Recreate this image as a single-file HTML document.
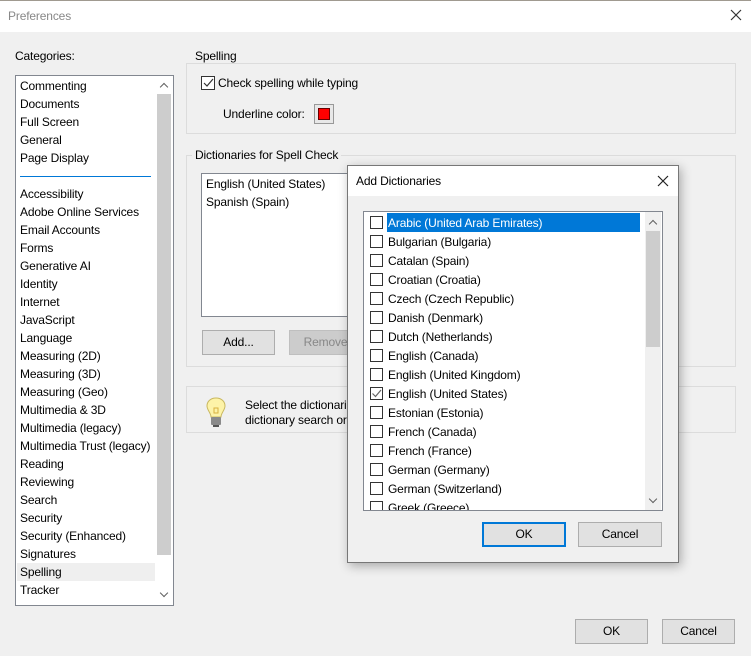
<!DOCTYPE html>
<html><head><style>
*{margin:0;padding:0;box-sizing:border-box}
body{width:751px;height:656px;background:#f0f0f0;font-family:"Liberation Sans",sans-serif;font-size:12px;color:#000;position:relative;overflow:hidden;letter-spacing:-0.15px}
.a{position:absolute}
.t{position:absolute;white-space:nowrap;line-height:14px}
.grp{position:absolute;border:1px solid #dcdcdc}
.btn{position:absolute;background:#e1e1e1;border:1px solid #adadad;text-align:center;line-height:22px}
.cb{position:absolute;width:14px;height:14px;border:1px solid #333;background:#fff}
.arr{position:absolute;width:6px;height:6px;border-left:1.5px solid #606060;border-top:1.5px solid #606060}
</style></head><body>
<div class="a" style="left:0;top:0;width:751px;height:32px;background:#fff;border-top:1px solid #a09a90"></div>
<div class="t" style="left:8px;top:9px;color:#888">Preferences</div>
<svg class="a" style="left:730px;top:9px" width="12" height="12"><path d="M1 1L11 11M11 1L1 11" stroke="#333" stroke-width="1.2"/></svg>

<div class="t" style="left:15px;top:49px">Categories:</div>
<div class="a" style="left:15px;top:75px;width:159px;height:531px;background:#fff;border:1px solid #828790"></div>
<div class="a" style="left:157px;top:94px;width:14px;height:461px;background:#cdcdcd"></div>
<div class="arr" style="left:161px;top:84px;transform:rotate(45deg)"></div>
<div class="arr" style="left:161px;top:590px;transform:rotate(225deg)"></div>
<div class="a" style="left:20px;top:176px;width:131px;height:1px;background:#0078d7"></div>
<div class="a" style="left:17px;top:563px;width:138px;height:18px;background:#efefef"></div>
<div class="a" style="left:20px;top:77px;line-height:18px">Commenting<br>Documents<br>Full Screen<br>General<br>Page Display<br><br>Accessibility<br>Adobe Online Services<br>Email Accounts<br>Forms<br>Generative AI<br>Identity<br>Internet<br>JavaScript<br>Language<br>Measuring (2D)<br>Measuring (3D)<br>Measuring (Geo)<br>Multimedia &amp; 3D<br>Multimedia (legacy)<br>Multimedia Trust (legacy)<br>Reading<br>Reviewing<br>Search<br>Security<br>Security (Enhanced)<br>Signatures<br>Spelling<br>Tracker</div>

<div class="grp" style="left:186px;top:63px;width:550px;height:71px"></div>
<div class="t" style="left:192px;top:49px;background:#f0f0f0;padding:0 3px">Spelling</div>
<div class="cb" style="left:201px;top:76px"><svg width="12" height="12" style="position:absolute;left:0;top:0"><path d="M2 6L5 9L11 2" stroke="#333" fill="none" stroke-width="1.2"/></svg></div>
<div class="t" style="left:218px;top:76px">Check spelling while typing</div>
<div class="t" style="left:223px;top:107px">Underline color:</div>
<div class="a" style="left:314px;top:104px;width:20px;height:20px;border:1px solid #999;background:#e8e8e8"></div>
<div class="a" style="left:318px;top:108px;width:12px;height:12px;background:#f00;border:1px solid #600"></div>

<div class="grp" style="left:186px;top:155px;width:550px;height:212px"></div>
<div class="t" style="left:192px;top:148px;background:#f0f0f0;padding:0 3px">Dictionaries for Spell Check</div>
<div class="a" style="left:201px;top:173px;width:160px;height:144px;background:#fff;border:1px solid #828790"></div>
<div class="t" style="left:206px;top:177px">English (United States)</div>
<div class="t" style="left:206px;top:195px">Spanish (Spain)</div>
<div class="btn" style="left:202px;top:330px;width:73px;height:25px">Add...</div>
<div class="btn" style="left:289px;top:330px;width:73px;height:25px;color:#888;background:#cccccc;border-color:#bfbfbf">Remove</div>

<div class="grp" style="left:186px;top:386px;width:550px;height:47px"></div>
<svg class="a" style="left:205px;top:397px" width="22" height="32" viewBox="0 0 22 32"><path d="M11 1C5 1 2 5 2 9c0 4 4 7 4 11h10c0-4 4-7 4-11 0-4-3-8-9-8z" fill="#fdf3a8" stroke="#c9b860"/><rect x="9" y="11" width="4" height="5" fill="none" stroke="#d8b040"/><rect x="6" y="20" width="10" height="8" fill="#8a8a8a" rx="1"/><rect x="8" y="28" width="6" height="2" fill="#555"/></svg>
<div class="t" style="left:245px;top:398px">Select the dictionaries</div>
<div class="t" style="left:245px;top:413px">dictionary search ord</div>

<div class="btn" style="left:575px;top:619px;width:73px;height:25px">OK</div>
<div class="btn" style="left:662px;top:619px;width:73px;height:25px">Cancel</div>

<div class="a" style="left:347px;top:165px;width:332px;height:398px;background:#f0f0f0;border:1px solid #777;box-shadow:2px 3px 10px rgba(0,0,0,.3)"></div>
<div class="a" style="left:348px;top:166px;width:330px;height:30px;background:#fff"></div>
<div class="t" style="left:356px;top:174px">Add Dictionaries</div>
<svg class="a" style="left:657px;top:175px" width="12" height="12"><path d="M1 1L11 11M11 1L1 11" stroke="#222" stroke-width="1.2"/></svg>
<div class="a" style="left:363px;top:211px;width:300px;height:300px;background:#fff;border:1px solid #828790;overflow:hidden">
<div class="a" style="left:281px;top:0;width:16px;height:298px;background:#f0f0f0"></div>
<div class="a" style="left:282px;top:19px;width:14px;height:116px;background:#cdcdcd"></div>
<div class="arr" style="left:286px;top:9px;transform:rotate(45deg)"></div>
<div class="arr" style="left:286px;top:284px;transform:rotate(225deg)"></div>
<div class="a" style="left:23px;top:1px;width:253px;height:19px;background:#0078d7"></div>
<div class="a" style="left:6px;top:2px;line-height:19px">
<div style="position:relative;padding-left:18px;color:#fff"><span class="cb" style="left:0;top:2px;width:13px;height:13px"></span>Arabic (United Arab Emirates)</div>
<div style="position:relative;padding-left:18px"><span class="cb" style="left:0;top:2px;width:13px;height:13px"></span>Bulgarian (Bulgaria)</div>
<div style="position:relative;padding-left:18px"><span class="cb" style="left:0;top:2px;width:13px;height:13px"></span>Catalan (Spain)</div>
<div style="position:relative;padding-left:18px"><span class="cb" style="left:0;top:2px;width:13px;height:13px"></span>Croatian (Croatia)</div>
<div style="position:relative;padding-left:18px"><span class="cb" style="left:0;top:2px;width:13px;height:13px"></span>Czech (Czech Republic)</div>
<div style="position:relative;padding-left:18px"><span class="cb" style="left:0;top:2px;width:13px;height:13px"></span>Danish (Denmark)</div>
<div style="position:relative;padding-left:18px"><span class="cb" style="left:0;top:2px;width:13px;height:13px"></span>Dutch (Netherlands)</div>
<div style="position:relative;padding-left:18px"><span class="cb" style="left:0;top:2px;width:13px;height:13px"></span>English (Canada)</div>
<div style="position:relative;padding-left:18px"><span class="cb" style="left:0;top:2px;width:13px;height:13px"></span>English (United Kingdom)</div>
<div style="position:relative;padding-left:18px"><span class="cb" style="left:0;top:2px;width:13px;height:13px"><svg width="11" height="11" style="position:absolute;left:0;top:0"><path d="M1.5 5.5L4.5 8.5L10 2" stroke="#666" fill="none" stroke-width="1.2"/></svg></span>English (United States)</div>
<div style="position:relative;padding-left:18px"><span class="cb" style="left:0;top:2px;width:13px;height:13px"></span>Estonian (Estonia)</div>
<div style="position:relative;padding-left:18px"><span class="cb" style="left:0;top:2px;width:13px;height:13px"></span>French (Canada)</div>
<div style="position:relative;padding-left:18px"><span class="cb" style="left:0;top:2px;width:13px;height:13px"></span>French (France)</div>
<div style="position:relative;padding-left:18px"><span class="cb" style="left:0;top:2px;width:13px;height:13px"></span>German (Germany)</div>
<div style="position:relative;padding-left:18px"><span class="cb" style="left:0;top:2px;width:13px;height:13px"></span>German (Switzerland)</div>
<div style="position:relative;padding-left:18px"><span class="cb" style="left:0;top:2px;width:13px;height:13px"></span>Greek (Greece)</div>
</div></div>
<div class="btn" style="left:482px;top:522px;width:84px;height:25px;border:2px solid #0078d7;line-height:21px">OK</div>
<div class="btn" style="left:578px;top:522px;width:84px;height:25px">Cancel</div>
</body></html>
